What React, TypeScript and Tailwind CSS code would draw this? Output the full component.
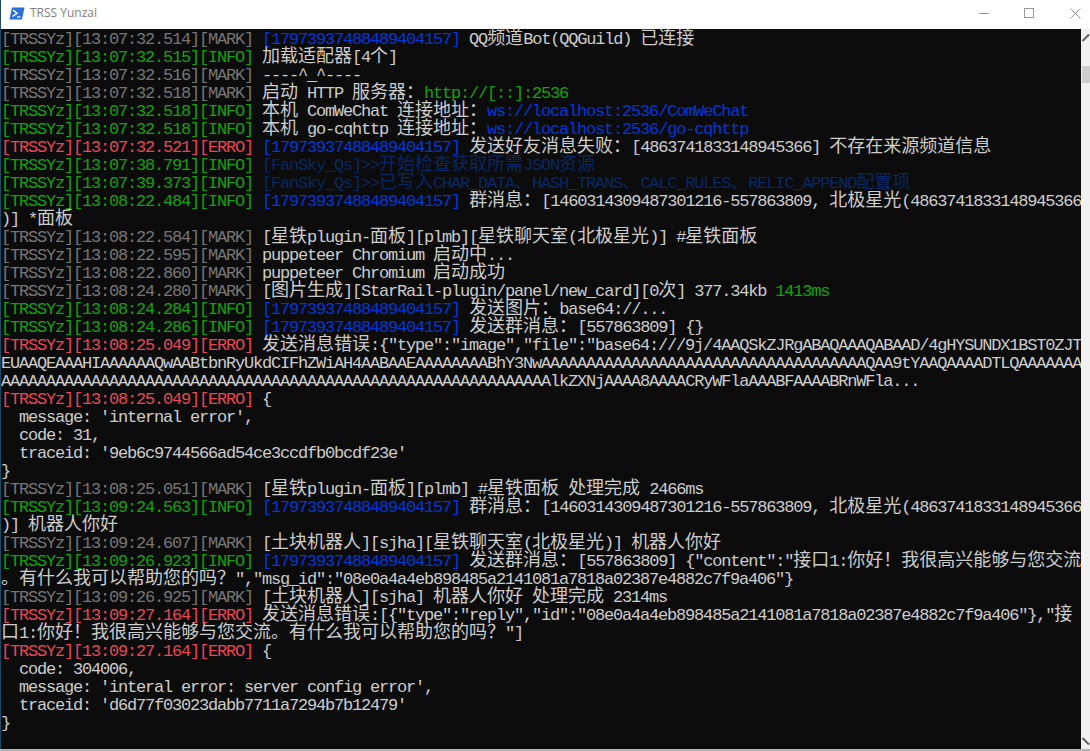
import React from "react";

const W = "text-[#cccccc]";
const B = "text-[#0037da]";
const D = "text-[#0a2763]";
const G = "text-[#13a10e]";
const LV: Record<string, string> = {
  M: "text-[#767676]",
  I: "text-[#13a10e]",
  E: "text-[#e74856]",
};
const NAME: Record<string, string> = { M: "MARK", I: "INFO", E: "ERRO" };

type Seg = [string, string];
type Row = { lv?: string; t?: string; segs: Seg[] };

const ID = "[17973937488489404157]";
const r = (lv: string, t: string, ...segs: Seg[]): Row => ({ lv, t, segs });
const c = (s: string): Row => ({ segs: [[W, s]] });
const w = (s: string): Seg => [W, s];
const b = (s: string): Seg => [B, s];

const rows: Row[] = [
  r("M", "13:07:32.514", b(ID), w(" QQ频道Bot(QQGuild) 已连接")),
  r("I", "13:07:32.515", w("加载适配器[4个]")),
  r("M", "13:07:32.516", w("----^_^----")),
  r("M", "13:07:32.518", w("启动 HTTP 服务器："), [G, "http://[::]:2536"]),
  r("I", "13:07:32.518", w("本机 ComWeChat 连接地址："), b("ws://localhost:2536/ComWeChat")),
  r("I", "13:07:32.518", w("本机 go-cqhttp 连接地址："), b("ws://localhost:2536/go-cqhttp")),
  r("E", "13:07:32.521", b(ID), w(" 发送好友消息失败：[4863741833148945366] 不存在来源频道信息")),
  r("I", "13:07:38.791", [D, "[FanSky_Qs]>>开始检查获取所需JSON资源"]),
  r("I", "13:07:39.373", [D, "[FanSky_Qs]>>已写入CHAR_DATA、HASH_TRANS、CALC_RULES、RELIC_APPEND配置项"]),
  r("I", "13:08:22.484", b(ID), w(" 群消息：[1460314309487301216-557863809, 北极星光(4863741833148945366")),
  c(")] *面板"),
  r("M", "13:08:22.584", w("[星铁plugin-面板][plmb][星铁聊天室(北极星光)] #星铁面板")),
  r("M", "13:08:22.595", w("puppeteer Chromium 启动中...")),
  r("M", "13:08:22.860", w("puppeteer Chromium 启动成功")),
  r("M", "13:08:24.280", w("[图片生成][StarRail-plugin/panel/new_card][0次] 377.34kb "), [G, "1413ms"]),
  r("I", "13:08:24.284", b(ID), w(" 发送图片：base64://...")),
  r("I", "13:08:24.286", b(ID), w(" 发送群消息：[557863809] {}")),
  r("E", "13:08:25.049", w('发送消息错误:{"type":"image","file":"base64:///9j/4AAQSkZJRgABAQAAAQABAAD/4gHYSUNDX1BST0ZJT')),
  c("EUAAQEAAAHIAAAAAAQwAABtbnRyUkdCIFhZWiAH4AABAAEAAAAAAAABhY3Nw".padEnd(96, "A") + "QAA9tYAAQAAAADTLQ".padEnd(24, "A")),
  c("A".repeat(61) + "lkZXNjAAAA8AAAACRyWFlaAAABFAAAABRnWFla..."),
  r("E", "13:08:25.049", w("{")),
  c("  message: 'internal error',"),
  c("  code: 31,"),
  c("  traceid: '9eb6c9744566ad54ce3ccdfb0bcdf23e'"),
  c("}"),
  r("M", "13:08:25.051", w("[星铁plugin-面板][plmb] #星铁面板 处理完成 2466ms")),
  r("I", "13:09:24.563", b(ID), w(" 群消息：[1460314309487301216-557863809, 北极星光(4863741833148945366")),
  c(")] 机器人你好"),
  r("M", "13:09:24.607", w("[土块机器人][sjha][星铁聊天室(北极星光)] 机器人你好")),
  r("I", "13:09:26.923", b(ID), w(' 发送群消息：[557863809] {"content":"接口1:你好！我很高兴能够与您交流')),
  c('。有什么我可以帮助您的吗？","msg_id":"08e0a4a4eb898485a2141081a7818a02387e4882c7f9a406"}'),
  r("M", "13:09:26.925", w("[土块机器人][sjha] 机器人你好 处理完成 2314ms")),
  r("E", "13:09:27.164", w('发送消息错误:[{"type":"reply","id":"08e0a4a4eb898485a2141081a7818a02387e4882c7f9a406"},"接')),
  c('口1:你好！我很高兴能够与您交流。有什么我可以帮助您的吗？"]'),
  r("E", "13:09:27.164", w("{")),
  c("  code: 304006,"),
  c("  message: 'interal error: server config error',"),
  c("  traceid: 'd6d77f03023dabb7711a7294b7b12479'"),
  c("}"),
];

function Txt({ s, color }: { s: string; color: string }) {
  const parts = s.split(/([\u3000-\u9fff\uff00-\uffef]+)/);
  return (
    <span className={color}>
      {parts.map((p, i) =>
        i % 2 === 1 ? (
          <span key={i} className="text-[18px] leading-[0] tracking-normal font-['Noto_Sans_CJK_SC',sans-serif]">
            {p}
          </span>
        ) : (
          <span key={i}>{p}</span>
        )
      )}
    </span>
  );
}

function LogRow({ row }: { row: Row }) {
  return (
    <div className="h-[18px] whitespace-pre">
      {row.lv && (
        <span className={LV[row.lv]}>{`[TRSSYz][${row.t}][${NAME[row.lv]}] `}</span>
      )}
      {row.segs.map((s, i) => (
        <Txt key={i} color={s[0]} s={s[1]} />
      ))}
    </div>
  );
}

export default function App() {
  return (
    <div className="w-[1090px] h-[751px] flex flex-col overflow-hidden bg-[#b4b4b4]">
      <div className="h-[29px] shrink-0 bg-white flex items-center border-l border-[#1f4a63] pb-[3px]">
        <svg width="16" height="13" viewBox="0 0 16 13" className="ml-[8px] shrink-0">
          <path d="M3 0.5H15.5L13 12.5H0.5Z" fill="#2a6fd6" />
          <path d="M4 3L8 6.2L3.5 9.5" fill="none" stroke="#fff" strokeWidth="1.4" />
          <path d="M8 10H11.5" stroke="#fff" strokeWidth="1.2" />
        </svg>
        <span className="ml-[5px] text-[12px] text-[#7f7f7f] font-['Open_Sans',sans-serif]">TRSS Yunzai</span>
        <div className="ml-auto flex items-center shrink-0">
          <svg width="11" height="11" viewBox="0 0 11 11" className="mr-[34px]">
            <path d="M0 5.5H10" stroke="#999" strokeWidth="1" />
          </svg>
          <svg width="11" height="11" viewBox="0 0 11 11" className="mr-[35px]">
            <rect x="0.5" y="0.5" width="9" height="9" fill="none" stroke="#999" strokeWidth="1" />
          </svg>
          <svg width="11" height="11" viewBox="0 0 11 11" className="mr-[9px]">
            <path d="M0.5 0.5L10.5 10.5M10.5 0.5L0.5 10.5" stroke="#999" strokeWidth="1" />
          </svg>
        </div>
      </div>
      <div className="flex-1 min-h-0 flex border-l border-[#1f4a63]">
        <div className="flex-1 bg-[#0c0c0c] overflow-hidden pt-[2px] text-[17px] tracking-[-1.2px] leading-[18px] font-['Liberation_Mono',monospace]">
          {rows.map((row, i) => (
            <LogRow key={i} row={row} />
          ))}
        </div>
        <div className="w-[9px] shrink-0 bg-[#f0f0f0] flex flex-col">
          <svg width="9" height="8" viewBox="0 0 9 8" className="mt-[5px] shrink-0">
            <path d="M1.5 7L5 3.5L8 0.5" fill="none" stroke="#606060" strokeWidth="2" />
          </svg>
          <div className="mt-[24px] ml-[1px] h-[17px] bg-[#cdcdcd] shrink-0" />
          <svg width="9" height="8" viewBox="0 0 9 8" className="mt-auto mb-[4px] shrink-0">
            <path d="M1.5 1L5 4.5L8 7.5" fill="none" stroke="#606060" strokeWidth="2" />
          </svg>
        </div>
      </div>
      <div className="h-[2px] shrink-0" />
    </div>
  );
}
